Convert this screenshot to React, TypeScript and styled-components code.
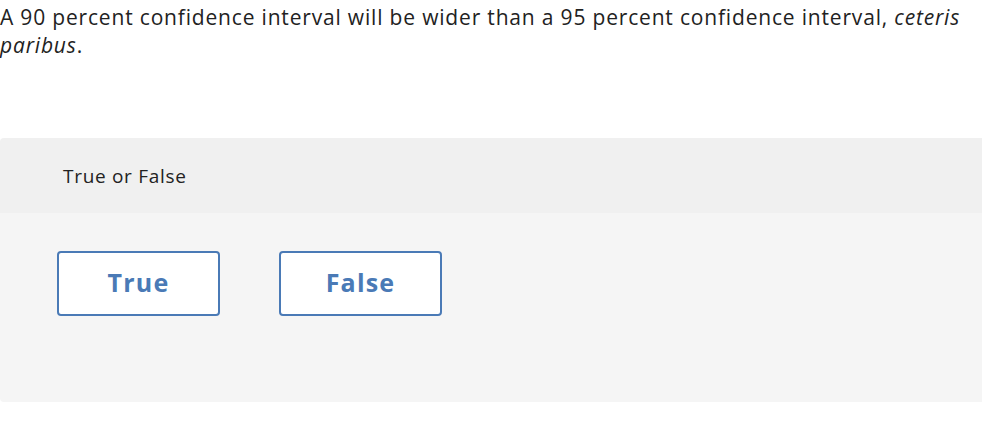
import React from 'react';
import styled, { createGlobalStyle } from 'styled-components';

const GlobalStyle = createGlobalStyle`
  html, body {
    margin: 0;
    padding: 0;
    background: #ffffff;
  }
  body {
    font-family: "Open Sans", Lato, sans-serif;
    color: #222222;
  }
`;

const Page = styled.div`
  width: 982px;
  overflow: hidden;
`;

const Prompt = styled.p`
  margin: 0;
  font-size: 21px;
  line-height: 28px;
  letter-spacing: 0.82px;
  padding-top: 3px;
  color: #222222;
`;

const Question = styled.section`
  margin-top: 79px;
  width: 990px;
  border-radius: 4px;
  overflow: hidden;
`;

const Header = styled.div`
  background: #f0f0f0;
  height: 75px;
  display: flex;
  align-items: center;
  padding-left: 63px;
  font-size: 19px;
  letter-spacing: 0.7px;
  color: #222222;
`;

const Choices = styled.div`
  background: #f5f5f5;
  height: 189px;
  display: flex;
  align-items: flex-start;
  gap: 59px;
  padding: 38px 0 0 57px;
  box-sizing: border-box;
`;

const ChoiceButton = styled.button`
  width: 163px;
  height: 65px;
  border: 2px solid #4a7ab6;
  border-radius: 4px;
  background: #ffffff;
  color: #4a7ab6;
  font-family: "Open Sans", Lato, sans-serif;
  font-weight: 700;
  font-size: 25px;
  letter-spacing: 1.2px;
  cursor: pointer;
  padding: 0 0 4px;
`;

export default function App() {
  return (
    <Page>
      <GlobalStyle />
      <Prompt>
        A 90 percent confidence interval will be wider than a 95 percent confidence interval, <em>ceteris paribus</em>.
      </Prompt>
      <Question>
        <Header>True or False</Header>
        <Choices>
          <ChoiceButton>True</ChoiceButton>
          <ChoiceButton>False</ChoiceButton>
        </Choices>
      </Question>
    </Page>
  );
}
